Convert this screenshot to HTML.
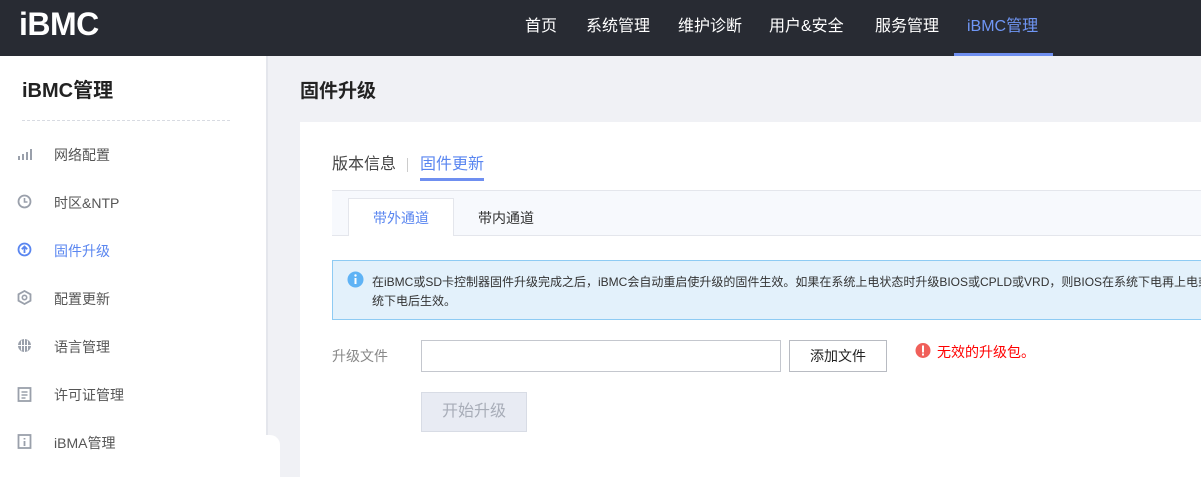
<!DOCTYPE html><html><head><meta charset="utf-8"><style>
*{margin:0;padding:0;box-sizing:border-box}
body{width:1201px;height:477px;overflow:hidden;background:#f0f1f5;font-family:"Liberation Sans","Noto Sans CJK SC",sans-serif;position:relative}
.hd{position:absolute;left:0;top:0;width:1201px;height:56px;background:#282b33}
.logo{position:absolute;left:19px;top:6px;color:#fff;font-size:32px;font-weight:bold;letter-spacing:-0.5px}
.nav{position:absolute;top:0;height:56px;line-height:50px;padding-top:2px;color:#fff;font-size:16px}
.side{position:absolute;left:0;top:56px;width:268px;height:421px;background:#fff;border-right:2px solid #e4e6ec}
.st{position:absolute;left:22px;top:74px;font-size:20px;font-weight:bold;color:#222}
.dash{position:absolute;left:22px;top:120px;width:208px;border-top:1px dashed #d8dbe2}
.mi{position:absolute;left:54px;font-size:14px;color:#555}
.ic{position:absolute;left:17px;width:15px;height:15px}
.panel{position:absolute;left:300px;top:122px;width:901px;height:355px;background:#fff}
.abs{position:absolute}
</style></head><body>
<div class="hd"><div class="logo">iBMC</div>
<div class="nav" style="left:525px">首页</div>
<div class="nav" style="left:586px">系统管理</div>
<div class="nav" style="left:678px">维护诊断</div>
<div class="nav" style="left:769px">用户&amp;安全</div>
<div class="nav" style="left:875px">服务管理</div>
<div class="nav" style="left:967px;color:#6f96f5">iBMC管理</div>
<div class="abs" style="left:954px;top:53px;width:99px;height:3px;background:#6f8ff0"></div>
</div>
<div class="side"></div>
<div class="st">iBMC管理</div><div class="dash"></div>
<svg class="ic" style="top:147px" viewBox="0 0 15 15"><g fill="#9aa0ab"><rect x="1" y="9" width="2" height="4"/><rect x="5" y="7" width="2" height="6"/><rect x="9" y="5" width="2" height="8"/><rect x="13" y="2" width="2" height="11"/></g></svg>
<div class="mi" style="top:145px">网络配置</div>
<svg class="ic" style="top:194px" viewBox="0 0 15 15"><circle cx="7.5" cy="7.5" r="6" fill="none" stroke="#9aa0ab" stroke-width="1.8"/><path d="M7.5 4v4h3" fill="none" stroke="#9aa0ab" stroke-width="1.6"/></svg>
<div class="mi" style="top:193px">时区&amp;NTP</div>
<svg class="ic" style="top:242px" viewBox="0 0 15 15"><circle cx="7.5" cy="7.5" r="6" fill="none" stroke="#5a86f0" stroke-width="1.8"/><path d="M7.5 11V4.5M4.8 7.2l2.7-2.7 2.7 2.7" fill="none" stroke="#5a86f0" stroke-width="1.8"/></svg>
<div class="mi" style="top:241px;color:#5a86f0">固件升级</div>
<svg class="ic" style="top:290px" viewBox="0 0 15 15"><path d="M7.5 1l6 3.3v6.4L7.5 14l-6-3.3V4.3z" fill="none" stroke="#9aa0ab" stroke-width="1.8"/><circle cx="7.5" cy="7.5" r="2.2" fill="none" stroke="#9aa0ab" stroke-width="1.6"/></svg>
<div class="mi" style="top:289px">配置更新</div>
<svg class="ic" style="top:338px" viewBox="0 0 15 15"><circle cx="7.5" cy="7.5" r="6.5" fill="#9aa0ab"/><path d="M1 7.5h13M7.5 1v13M4.5 2.5v10M10.5 2.5v10" stroke="#fff" stroke-width="1"/></svg>
<div class="mi" style="top:337px">语言管理</div>
<svg class="ic" style="top:387px" viewBox="0 0 15 15"><rect x="1.5" y="1" width="12" height="13" fill="none" stroke="#9aa0ab" stroke-width="1.8"/><path d="M4.5 5h6M4.5 8h6M4.5 11h4" stroke="#9aa0ab" stroke-width="1.4"/></svg>
<div class="mi" style="top:385px">许可证管理</div>
<svg class="ic" style="top:434px" viewBox="0 0 15 15"><rect x="1.5" y="1" width="12" height="13" fill="none" stroke="#9aa0ab" stroke-width="1.8"/><path d="M7.5 4v1.5M7.5 7v5" stroke="#9aa0ab" stroke-width="1.8"/></svg>
<div class="mi" style="top:433px">iBMA管理</div>
<div class="abs" style="left:260px;top:435px;width:20px;height:42px;background:#fff;border-top-right-radius:10px"></div>
<div class="abs" style="left:300px;top:76px;font-size:19px;font-weight:bold;color:#222">固件升级</div>
<div class="panel"></div>
<div class="abs" style="left:332px;top:150px;font-size:16px;color:#444">版本信息</div>
<div class="abs" style="left:407px;top:158px;width:1px;height:14px;background:#ccc"></div>
<div class="abs" style="left:420px;top:150px;font-size:16px;color:#5a86f0">固件更新</div>
<div class="abs" style="left:420px;top:178px;width:64px;height:3px;background:#6f8ff0"></div>
<div class="abs" style="left:332px;top:190px;width:869px;height:46px;background:#f7f9fd;border-top:1px solid #e4e6ec;border-bottom:1px solid #e4e6ec"></div>
<div class="abs" style="left:348px;top:198px;width:106px;height:38px;background:#fff;border:1px solid #e4e6ec;border-bottom:none;text-align:center;line-height:38px;font-size:14px;color:#5a86f0">带外通道</div>
<div class="abs" style="left:478px;top:208px;font-size:14px;color:#333">带内通道</div>
<div class="abs" style="left:332px;top:260px;width:875px;height:60px;background:#e3f1fb;border:1px solid #8ecbf3"></div>
<svg class="abs" style="left:347px;top:271px" width="17" height="17" viewBox="0 0 17 17"><circle cx="8.5" cy="8.5" r="8" fill="#5fb3f5"/><rect x="7.5" y="7" width="2" height="6" fill="#fff"/><circle cx="8.5" cy="4.5" r="1.2" fill="#fff"/></svg>
<div class="abs" style="left:372px;top:273px;font-size:12px;color:#333;white-space:nowrap;line-height:19px">在iBMC或SD卡控制器固件升级完成之后，iBMC会自动重启使升级的固件生效。如果在系统上电状态时升级BIOS或CPLD或VRD，则BIOS在系统下电再上电或<br>统下电后生效。</div>
<div class="abs" style="left:332px;top:346px;font-size:14px;color:#888">升级文件</div>
<div class="abs" style="left:421px;top:340px;width:360px;height:32px;border:1px solid #c4c7ce;background:#fff"></div>
<div class="abs" style="left:789px;top:340px;width:98px;height:32px;border:1px solid #b8bbc2;background:#fff;text-align:center;line-height:30px;font-size:14px;color:#222">添加文件</div>
<svg class="abs" style="left:915px;top:342px" width="16" height="17" viewBox="0 0 16 17"><circle cx="8" cy="8.5" r="7.5" fill="#f0605a"/><rect x="7" y="3.5" width="2" height="7" fill="#fff"/><rect x="7" y="11.5" width="2" height="2" fill="#fff"/></svg>
<div class="abs" style="left:937px;top:342px;font-size:14px;color:#f00">无效的升级包。</div>
<div class="abs" style="left:421px;top:392px;width:106px;height:40px;background:#e8ebf3;border:1px solid #d8dce5;text-align:center;line-height:38px;font-size:16px;color:#a8adb8">开始升级</div>
</body></html>
